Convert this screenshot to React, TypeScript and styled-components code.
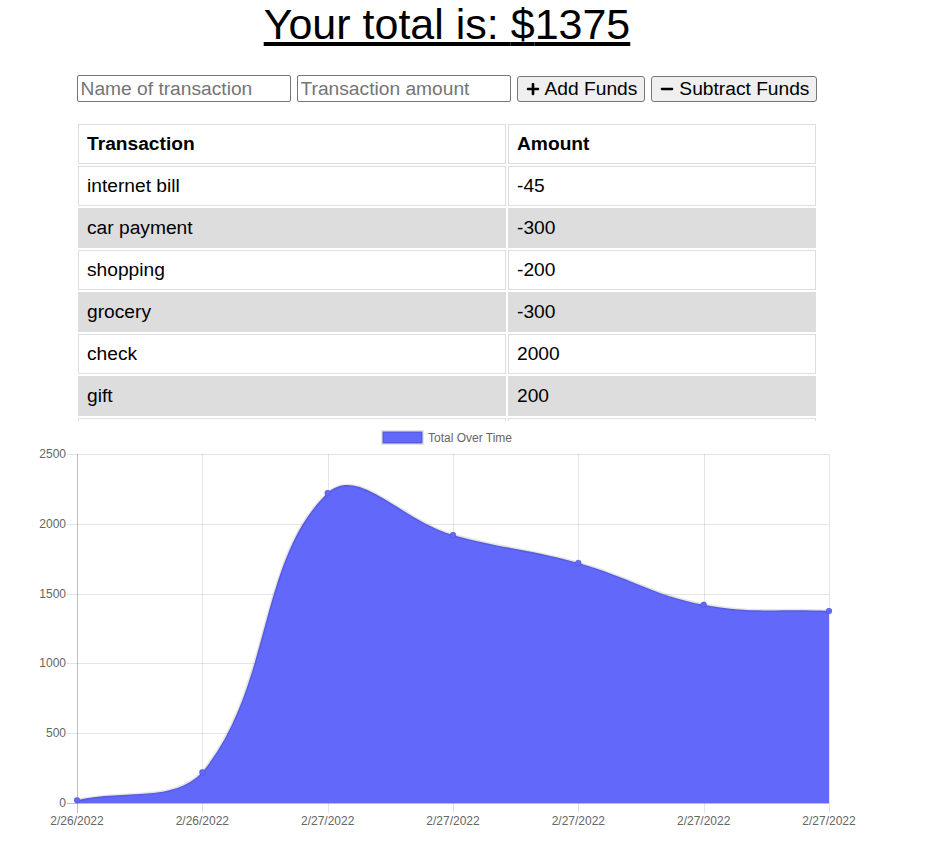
import { FC } from "react";

import styled, { createGlobalStyle } from "styled-components";
import { FaMinus, FaPlus } from "react-icons/fa";

interface Transaction {
  name: string;
  value: number;
}

// newest first, as the table lists them
const transactions: Transaction[] = [
  { name: "internet bill", value: -45 },
  { name: "car payment", value: -300 },
  { name: "shopping", value: -200 },
  { name: "grocery", value: -300 },
  { name: "check", value: 2000 },
  { name: "gift", value: 200 },
  { name: "savings", value: 20 },
];

const labels = [
  "2/26/2022",
  "2/26/2022",
  "2/27/2022",
  "2/27/2022",
  "2/27/2022",
  "2/27/2022",
  "2/27/2022",
];

const plot = { left: 77, right: 829, top: 454, bottom: 803 };
const yMax = 2500;
const yTicks = [2500, 2000, 1500, 1000, 500, 0];
const tension = 0.4;

interface Point {
  x: number;
  y: number;
}

const clampToPlot = (p: Point): Point => ({
  x: Math.min(Math.max(p.x, plot.left), plot.right),
  y: Math.min(Math.max(p.y, plot.top), plot.bottom),
});

// same spline as chart.js v2 with lineTension 0.4
const buildCurve = (points: Point[]) => {
  const controls = points.map((cur, i) => {
    const prev = points[Math.max(i - 1, 0)];
    const next = points[Math.min(i + 1, points.length - 1)];
    const d01 = Math.hypot(cur.x - prev.x, cur.y - prev.y);
    const d12 = Math.hypot(next.x - cur.x, next.y - cur.y);
    const s01 = d01 / (d01 + d12) || 0;
    const s12 = d12 / (d01 + d12) || 0;
    return {
      before: clampToPlot({
        x: cur.x - tension * s01 * (next.x - prev.x),
        y: cur.y - tension * s01 * (next.y - prev.y),
      }),
      after: clampToPlot({
        x: cur.x + tension * s12 * (next.x - prev.x),
        y: cur.y + tension * s12 * (next.y - prev.y),
      }),
    };
  });

  let d = `M${points[0].x},${points[0].y}`;
  for (let i = 1; i < points.length; i++) {
    const a = controls[i - 1].after;
    const b = controls[i].before;
    d += ` C${a.x},${a.y} ${b.x},${b.y} ${points[i].x},${points[i].y}`;
  }
  return d;
};

const GlobalStyle = createGlobalStyle`
  body {
    margin: 0;
    background: #ffffff;
    font-family: "Liberation Sans", Arial, Helvetica, sans-serif;
  }
`;

const App: FC = () => {
  const total = transactions.reduce((sum, t) => sum + t.value, 0);

  const history = [...transactions].reverse().reduce<number[]>((acc, t) => {
    acc.push((acc[acc.length - 1] ?? 0) + t.value);
    return acc;
  }, []);

  const step = (plot.right - plot.left) / (history.length - 1);
  const xAt = (i: number) => plot.left + i * step;
  const yAt = (v: number) =>
    plot.bottom - (v / yMax) * (plot.bottom - plot.top);

  const points = history.map((v, i) => ({ x: xAt(i), y: yAt(v) }));
  const curve = buildCurve(points);
  const area = `${curve} L${plot.right},${plot.bottom} L${plot.left},${plot.bottom} Z`;

  return (
    <>
      <GlobalStyle />
      <Page>
        <Title>
          Your total is: <span>${total}</span>
        </Title>

        <Form>
          <TextInput type="text" placeholder="Name of transaction" />
          <TextInput type="number" placeholder="Transaction amount" />
          <FundButton>
            <FaPlus size={14} />
            <span>Add Funds</span>
          </FundButton>
          <FundButton>
            <FaMinus size={14} />
            <span>Subtract Funds</span>
          </FundButton>
        </Form>

        <TableWrap>
          <Table>
            <colgroup>
              <col style={{ width: 428 }} />
              <col />
            </colgroup>
            <thead>
              <tr>
                <HeadCell>Transaction</HeadCell>
                <HeadCell>Amount</HeadCell>
              </tr>
            </thead>
            <tbody>
              {transactions.map((t, idx) => (
                <Row key={idx} $shaded={idx % 2 === 1}>
                  <Cell>{t.name}</Cell>
                  <Cell>{t.value}</Cell>
                </Row>
              ))}
            </tbody>
          </Table>
        </TableWrap>

        <Chart viewBox="0 421 894 434" width={894} height={434}>
          <LegendBox x={382.5} y={431.5} width={40} height={12} />
          <LegendText x={428} y={437.5}>
            Total Over Time
          </LegendText>

          {yTicks.map((v) => (
            <g key={v}>
              <GridLine
                x1={plot.left - 10}
                x2={plot.right}
                y1={Math.round(yAt(v)) + 0.5}
                y2={Math.round(yAt(v)) + 0.5}
                $strong={v === 0}
              />
              <YLabel x={66} y={yAt(v)}>
                {v}
              </YLabel>
            </g>
          ))}

          {labels.map((label, i) => (
            <g key={i}>
              <GridLine
                x1={Math.round(xAt(i)) + 0.5}
                x2={Math.round(xAt(i)) + 0.5}
                y1={plot.top}
                y2={plot.bottom + 10}
                $strong={i === 0}
              />
              <XLabel x={xAt(i)} y={821}>
                {label}
              </XLabel>
            </g>
          ))}

          <AreaFill d={area} />
          <AreaLine d={curve} />
          {points.map((p, i) => (
            <Dot key={i} cx={p.x} cy={p.y} r={3} />
          ))}
        </Chart>
      </Page>
    </>
  );
};

const Page = styled.div`
  width: 894px;
  display: flex;
  flex-direction: column;
  align-items: center;
`;

const Title = styled.h1`
  margin: 0;

  font-size: 43px;
  font-weight: 400;
  line-height: normal;
  color: #000000;
  text-decoration: underline;
`;

const Form = styled.div`
  margin-top: 26px;

  display: flex;
  align-items: center;
  gap: 6px;
`;

const TextInput = styled.input`
  box-sizing: border-box;
  width: 214px;
  height: 27px;
  padding: 0 3px;

  border: 1px solid #767676;
  border-radius: 2px;
  font-family: inherit;
  font-size: 19.2px;
  color: #000000;

  &::placeholder {
    color: #757575;
  }

  &::-webkit-inner-spin-button {
    display: none;
  }
`;

const FundButton = styled.button`
  box-sizing: border-box;
  height: 26px;
  padding: 0 7px 0 8px;

  display: inline-flex;
  align-items: center;
  gap: 5px;

  background: #efefef;
  border: 1px solid #767676;
  border-radius: 3px;
  font-family: inherit;
  font-size: 19.2px;
  color: #000000;
`;

const TableWrap = styled.div`
  margin-top: 20px;
  height: 299px;
  overflow-y: auto;
  scrollbar-width: none;

  &::-webkit-scrollbar {
    display: none;
  }
`;

const Table = styled.table`
  width: 742px;
  table-layout: fixed;
  border-spacing: 2px;
  font-size: 19.2px;
  color: #000000;
`;

const HeadCell = styled.th`
  box-sizing: border-box;
  height: 40px;
  padding: 0 8px;

  border: 1px solid #dddddd;
  text-align: left;
  font-weight: 700;
`;

const Row = styled.tr<{ $shaded: boolean }>`
  background: ${(props) => (props.$shaded ? "#dddddd" : "#ffffff")};
`;

const Cell = styled.td`
  box-sizing: border-box;
  height: 40px;
  padding: 0 8px;

  border: 1px solid #dddddd;
`;

const Chart = styled.svg`
  display: block;
  align-self: flex-start;
  font-family: "Liberation Sans", Arial, Helvetica, sans-serif;
`;

const LegendBox = styled.rect`
  fill: #6168fa;
  stroke: rgba(0, 0, 0, 0.1);
  stroke-width: 3;
`;

const LegendText = styled.text`
  font-size: 12px;
  fill: #666666;
  dominant-baseline: central;
`;

const GridLine = styled.line<{ $strong: boolean }>`
  stroke: ${(props) =>
    props.$strong ? "rgba(0, 0, 0, 0.25)" : "rgba(0, 0, 0, 0.1)"};
  stroke-width: 1;
`;

const YLabel = styled.text`
  font-size: 12px;
  fill: #666666;
  text-anchor: end;
  dominant-baseline: central;
`;

const XLabel = styled.text`
  font-size: 12px;
  fill: #666666;
  text-anchor: middle;
  dominant-baseline: central;
`;

const AreaFill = styled.path`
  fill: #6168fa;
`;

const AreaLine = styled.path`
  fill: none;
  stroke: rgba(0, 0, 0, 0.1);
  stroke-width: 3;
`;

const Dot = styled.circle`
  fill: #6168fa;
  stroke: rgba(0, 0, 0, 0.1);
  stroke-width: 1;
`;

export default App;
